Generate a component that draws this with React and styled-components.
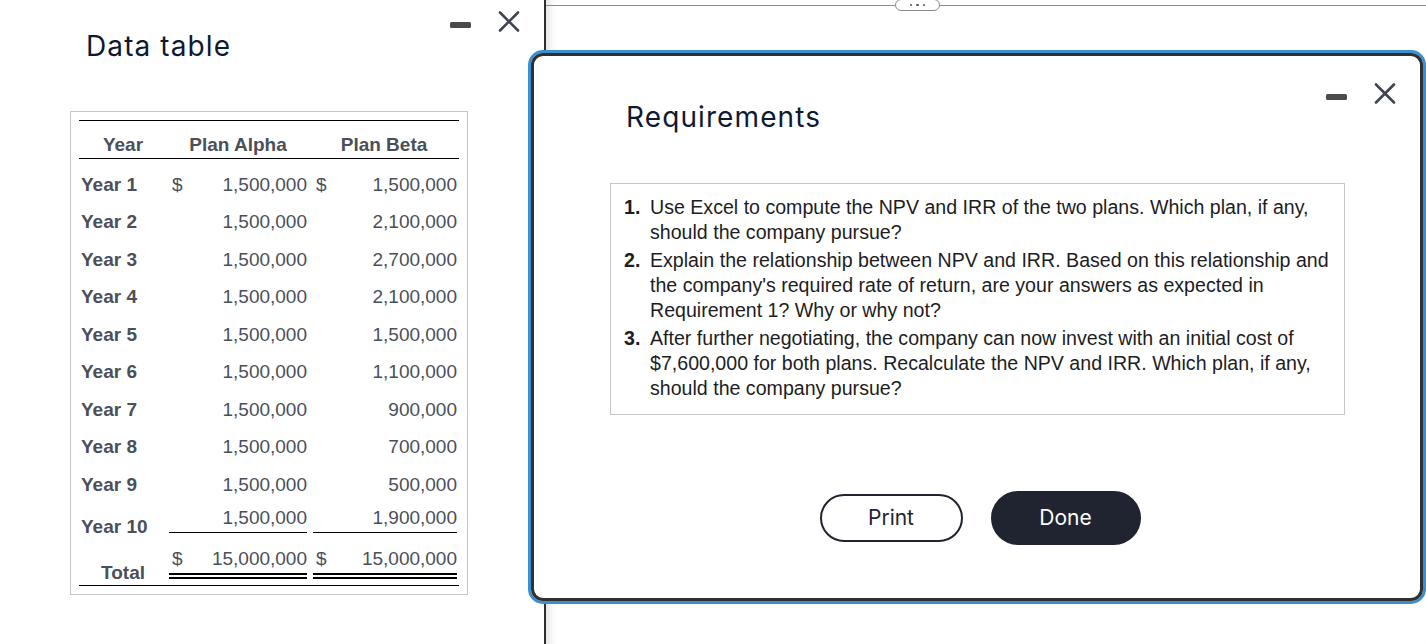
import React from 'react';
import styled, { createGlobalStyle } from 'styled-components';

const GlobalStyle = createGlobalStyle`
  html, body { margin: 0; padding: 0; background: #fff; }
  body { font-family: "Liberation Sans", Arial, sans-serif; overflow: hidden; }
  * { box-sizing: border-box; }
`;

const Page = styled.div`
  position: relative;
  display: flex;
  width: 1426px;
  height: 644px;
  overflow: hidden;
  background: #fff;
`;

const LeftPanel = styled.section`
  flex: none;
  width: 546px;
  height: 100%;
  border-right: 2px solid #2e2e2e;
  display: flex;
  flex-direction: column;
`;

const PanelHeader = styled.header`
  display: flex;
  justify-content: space-between;
  align-items: flex-start;
  padding: ${p => p.$pad};
`;

const Title = styled.h1`
  margin: ${p => p.$mt}px 0 0;
  font-family: Inter, "Liberation Sans", sans-serif;
  font-size: 28px;
  line-height: 34px;
  font-weight: 400;
  color: #0d1a30;
  letter-spacing: 1.1px;
`;

const Controls = styled.div`
  display: flex;
  align-items: flex-start;
  gap: 27px;
`;

const MinimizeBar = styled.span`
  display: block;
  width: 21px;
  height: 6px;
  margin-top: 11px;
  border-radius: 1.5px;
  background: #4a4a4c;
`;

const CloseIcon = styled.svg`
  display: block;
  width: 22px;
  height: 21px;
`;

const WindowControls = () => (
  <Controls>
    <MinimizeBar />
    <CloseIcon viewBox="0 0 22 21">
      <path d="M2 1.5 L20 19.5 M20 1.5 L2 19.5" stroke="#3f4450" strokeWidth="2.6" strokeLinecap="round" fill="none" />
    </CloseIcon>
  </Controls>
);

const TableBox = styled.div`
  margin: 48px 0 0 70px;
  width: 398px;
  border: 1px solid #c6c6c6;
  padding: 8px;
  color: #4b4f5a;
  font-size: 19px;
`;

const Table = styled.div`
  border-top: 1px solid #000;
  border-bottom: 1px solid #000;
`;

const Row = styled.div`
  display: grid;
  grid-template-columns: 88px 142px 150px;
  height: ${p => p.$h}px;
  align-items: ${p => p.$align || 'center'};
  border-bottom: ${p => (p.$rule ? '1px solid #000' : 'none')};
  margin-top: ${p => p.$mt || 0}px;
`;

const HeadCell = styled.div`
  font-weight: 700;
  text-align: center;
  line-height: 22px;
  padding-bottom: 2px;
`;

const Label = styled.div`
  font-weight: 700;
  line-height: 22px;
  padding-left: ${p => (p.$center ? 0 : 2)}px;
  text-align: ${p => (p.$center ? 'center' : 'left')};
  align-self: ${p => p.$self || 'auto'};
  padding-bottom: ${p => p.$pb || 0}px;
`;

const Value = styled.div`
  display: flex;
  justify-content: space-between;
  line-height: 22px;
  margin: ${p => (p.$beta ? '0 2px 0 4px' : '0 2px')};
  padding-top: ${p => p.$pt || 0}px;
  padding-bottom: ${p => p.$pb || 0}px;
  border-bottom: ${p => (p.$under === 'single' ? '1px solid #000' : p.$under === 'double' ? '6px double #000' : 'none')};
  align-self: ${p => p.$self || 'auto'};
`;

const Dollar = styled.span`
  margin-left: 3px;
`;

const rows = [
  ['Year 1', '1,500,000', '1,500,000', true],
  ['Year 2', '1,500,000', '2,100,000'],
  ['Year 3', '1,500,000', '2,700,000'],
  ['Year 4', '1,500,000', '2,100,000'],
  ['Year 5', '1,500,000', '1,500,000'],
  ['Year 6', '1,500,000', '1,100,000'],
  ['Year 7', '1,500,000', '900,000'],
  ['Year 8', '1,500,000', '700,000'],
  ['Year 9', '1,500,000', '500,000'],
];

const RightArea = styled.div`
  flex: 1;
  height: 100%;
  box-shadow: inset 9px 0 9px -6px rgba(0, 0, 0, 0.13);
`;

const TopRule = styled.div`
  display: flex;
  align-items: center;
  height: 11px;
`;

const RuleLine = styled.span`
  display: block;
  height: 1px;
  background: #8a8a8a;
  width: ${p => (p.$w ? `${p.$w}px` : 'auto')};
  flex: ${p => (p.$w ? 'none' : 1)};
`;

const Pill = styled.span`
  display: flex;
  align-items: center;
  justify-content: center;
  gap: 4px;
  width: 45px;
  height: 12px;
  margin-top: -1px;
  border: 1px solid #8a8a8a;
  border-radius: 6px;
  background: #fff;
`;

const Dot = styled.span`
  display: block;
  width: 2.5px;
  height: 2.5px;
  border-radius: 50%;
  background: #555;
`;

const FocusRing = styled.div`
  position: absolute;
  left: 528px;
  top: 50px;
  width: 898px;
  height: 554px;
  border: 3px solid #3a8ed2;
  border-radius: 15px;
`;

const Dialog = styled.div`
  height: 100%;
  border: 3px solid #303030;
  border-radius: 12px;
  background: #fff;
  display: flex;
  flex-direction: column;
`;

const ReqBox = styled.ol`
  margin: 49px 0 0 76px;
  width: 735px;
  border: 1px solid #c6c6c6;
  padding: 10.5px 8px 13px 13px;
  list-style: none;
  display: flex;
  flex-direction: column;
  gap: 3px;
  font-size: 19.6px;
  line-height: 25px;
  color: #1d1d1f;
`;

const ReqItem = styled.li`
  display: grid;
  grid-template-columns: 26px 1fr;
`;

const ReqNum = styled.span`
  font-weight: 700;
`;

const ButtonRow = styled.div`
  display: flex;
  justify-content: center;
  align-items: center;
  gap: 28px;
  margin-top: 76px;
  padding-left: 6px;
`;

const Button = styled.button`
  width: ${p => (p.$primary ? 150 : 143)}px;
  height: ${p => (p.$primary ? 54 : 48)}px;
  border-radius: 27px;
  border: 2px solid #1f2430;
  background: ${p => (p.$primary ? '#1f2430' : '#fff')};
  color: ${p => (p.$primary ? '#fff' : '#1f2430')};
  font-family: Inter, "Liberation Sans", sans-serif;
  font-size: 21px;
  padding: 0;
  cursor: pointer;
`;

export default function App() {
  return (
    <Page>
      <GlobalStyle />
      <LeftPanel>
        <PanelHeader $pad="11px 24px 0 86px">
          <Title $mt={18}>Data table</Title>
          <WindowControls />
        </PanelHeader>
        <TableBox>
          <Table>
            <Row $h={38} $align="end" $rule>
              <HeadCell>Year</HeadCell>
              <HeadCell>Plan Alpha</HeadCell>
              <HeadCell>Plan Beta</HeadCell>
            </Row>
            {rows.map(([y, a, b, d], i) => (
              <Row key={y} $h={37.5} $mt={i === 0 ? 7 : 0}>
                <Label>{y}</Label>
                <Value>
                  <Dollar>{d ? '$' : ''}</Dollar>
                  <span>{a}</span>
                </Value>
                <Value $beta>
                  <Dollar>{d ? '$' : ''}</Dollar>
                  <span>{b}</span>
                </Value>
              </Row>
            ))}
            <Row $h={40} $align="start">
              <Label $self="end" $pb={5.5}>Year 10</Label>
              <Value $pt={3.5} $pb={3} $under="single">
                <span />
                <span>1,500,000</span>
              </Value>
              <Value $beta $pt={3.5} $pb={3} $under="single">
                <span />
                <span>1,900,000</span>
              </Value>
            </Row>
            <Row $h={41.5} $align="start">
              <Label $center $self="end" $pb={1}>Total</Label>
              <Value $pt={4.5} $pb={3} $under="double">
                <Dollar>$</Dollar>
                <span>15,000,000</span>
              </Value>
              <Value $beta $pt={4.5} $pb={3} $under="double">
                <Dollar>$</Dollar>
                <span>15,000,000</span>
              </Value>
            </Row>
          </Table>
        </TableBox>
      </LeftPanel>
      <RightArea>
        <TopRule>
          <RuleLine $w={349} />
          <Pill>
            <Dot />
            <Dot />
            <Dot />
          </Pill>
          <RuleLine />
        </TopRule>
      </RightArea>

      <FocusRing>
        <Dialog>
          <PanelHeader $pad="27px 24px 0 92px">
            <Title $mt={17}>Requirements</Title>
            <WindowControls />
          </PanelHeader>
          <ReqBox>
            <ReqItem>
              <ReqNum>1.</ReqNum>
              <span>Use Excel to compute the NPV and IRR of the two plans. Which plan, if any, should the company pursue?</span>
            </ReqItem>
            <ReqItem>
              <ReqNum>2.</ReqNum>
              <span>Explain the relationship between NPV and IRR. Based on this relationship and the company's required rate of return, are your answers as expected in Requirement 1? Why or why not?</span>
            </ReqItem>
            <ReqItem>
              <ReqNum>3.</ReqNum>
              <span>After further negotiating, the company can now invest with an initial cost of $7,600,000 for both plans. Recalculate the NPV and IRR. Which plan, if any, should the company pursue?</span>
            </ReqItem>
          </ReqBox>
          <ButtonRow>
            <Button>Print</Button>
            <Button $primary>Done</Button>
          </ButtonRow>
        </Dialog>
      </FocusRing>
    </Page>
  );
}
